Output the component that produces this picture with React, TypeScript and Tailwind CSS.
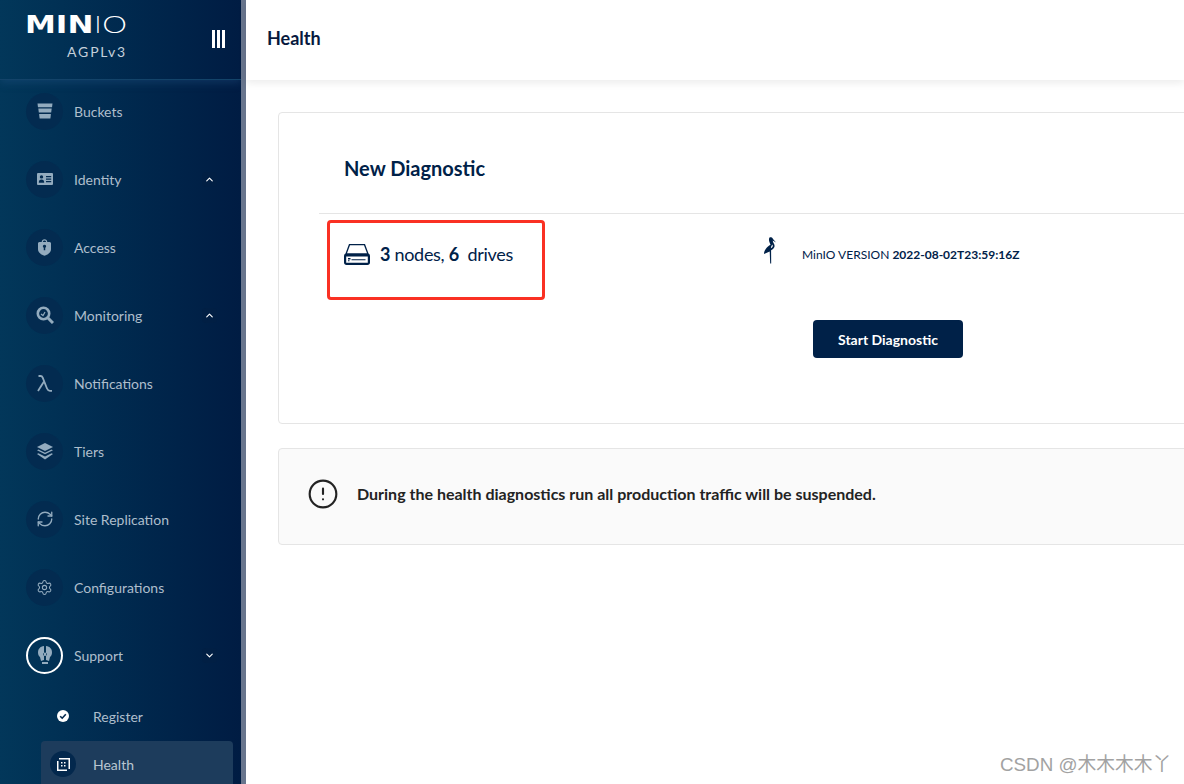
import { ChevronDown, ChevronUp, CircleAlert, RefreshCw, Settings } from 'lucide-react';
import { ReactNode } from 'react';

const BucketIcon = () => (
  <svg width="16" height="16" viewBox="0 0 16 16" fill="currentColor">
    <path d="M0.500 0.500h15l-0.500 3.800h-14z" />
    <path d="M1.300 5.500h13.400l-0.500 4h-12.400z" />
    <path d="M2.100 11h11.800l-0.500 4.500h-10.800z" />
  </svg>
);

const IdentityIcon = () => (
  <svg width="16" height="12" viewBox="0 0 16 12" fill="currentColor">
    <path fillRule="evenodd" d="M1 0h14a1 1 0 0 1 1 1v10a1 1 0 0 1-1 1H1a1 1 0 0 1-1-1V1a1 1 0 0 1 1-1zM4.500 2.200a1.700 1.700 0 1 0 0 3.400 1.700 1.700 0 0 0 0-3.400zM1.800 9.800h5.400c0-2-1-3.200-2.700-3.200S1.800 7.800 1.800 9.800zM9 3v1.200h5.200V3zM9 5.500v1.200h5.200V5.500zM9 8v1.200h5.200V8z" />
  </svg>
);

const AccessIcon = () => (
  <svg width="13" height="17" viewBox="0 0 14 18" fill="currentColor">
    <path fillRule="evenodd" d="M7 0c1.800 0 3 1.200 3 3h2.500L14 4v7c0 3.500-3.500 6-7 7-3.500-1-7-3.500-7-7V4l1.500-1H4c0-1.800 1.200-3 3-3zM7 1.500C6 1.500 5.400 2.100 5.300 3h3.400C8.600 2.100 8 1.500 7 1.500zM7 6a1.800 1.800 0 0 0-0.800 3.400V12h1.600V9.400A1.800 1.800 0 0 0 7 6z" />
  </svg>
);

const MonitoringIcon = () => (
  <svg width="18" height="18" viewBox="0 0 18 18" fill="none" stroke="currentColor">
    <circle cx="7.500" cy="7.500" r="5.700" strokeWidth="2.600" />
    <path d="M12 12l5 5" strokeWidth="3" />
    <path d="M5 8l2 1.500 2-3.500" strokeWidth="1.200" />
  </svg>
);

const LambdaIcon = () => (
  <svg width="16" height="17" viewBox="0 0 16 17" fill="none" stroke="currentColor" strokeWidth="1.800">
    <path d="M1.500 1h2.200c1 0 1.500 0.500 2 1.700L10 13.500c0.600 1.500 1.500 2.300 3 2.300h2" />
    <path d="M7 6.500L1 16" />
  </svg>
);

const TiersIcon = () => (
  <svg width="16" height="17" viewBox="0 0 16 17" fill="currentColor">
    <path d="M8 0l8 4-8 4-8-4z" />
    <path d="M1.500 6.500L8 9.800l6.500-3.300L16 7.300 8 11.300 0 7.300z" />
    <path d="M0 11l1.500-0.800L8 13.400l6.500-3.200L16 11l-8 5.500z" />
  </svg>
);

const SupportIcon = () => (
  <svg width="16" height="18" viewBox="0 0 16 18" fill="currentColor">
    <path fillRule="evenodd" d="M7 0C3 0.500 1 3 1 6.500c0 2 0.800 3.500 2 4.500L4 15l3-1V0zM9 0c4 0.500 6 3 6 6.500 0 2-0.800 3.500-2 4.500l-1 4-3-1V0zM8 6.500a1.800 1.800 0 1 0 0 3.600 1.800 1.800 0 0 0 0-3.600z" />
    <path d="M5 16h6v2H5z" />
  </svg>
);

const RegisterIcon = () => (
  <svg width="12" height="12" viewBox="0 0 12 12">
    <circle cx="6" cy="6" r="6" fill="#ffffff" />
    <path d="M3.200 6.200l2 2 3.600-4" fill="none" stroke="#03284d" strokeWidth="1.600" />
  </svg>
);

const HealthIcon = () => (
  <svg width="13" height="13" viewBox="0 0 13 13" fill="#ffffff">
    <path d="M2 0h11v11h-1.500V1.500H2z" />
    <path d="M0 3h1.500v8.500H10V13H0z" />
    <path d="M4 4h1.500v1.500H4zM7 4h1.500v1.500H7zM4 7h1.500v1.500H4zM7 7h1.500v1.500H7z" />
  </svg>
);

const DriveIcon = () => (
  <svg width="26" height="21" viewBox="0 0 26 21" fill="#002148">
    <path fillRule="evenodd" d="M5 0h16l3.500 9.500c1 0.500 1.500 1.500 1.500 2.500v6.500c0 1.400-1 2.500-2.500 2.500h-21C1 21 0 19.900 0 18.500V12c0-1 0.500-2 1.500-2.500zM6 1.300L3 9.300h20l-3-8zM2.200 12.600v6.200h21.600v-6.200z" />
    <path d="M4 14h2.500v1.500H4zM7.500 15.300h14v1h-14zM4 16.200h1.500v1H4z" />
  </svg>
);

const BirdIcon = () => (
  <svg width="14" height="27" viewBox="0 0 14 27" fill="#002148">
    <path fillRule="evenodd" d="M6.500 0.500c1.500-0.500 3 0 3.300 1.300L13 5.500 9.700 3.600c0.100 2 1.900 3.600 1.900 5.400 0 2-1.800 3.200-3.500 4.300l0.100 13.200H7.200L6.700 14.500 1 17c0-3.500 3-7.500 6.500-9.300L6.400 5c-0.500-1.500-0.700-3.400 0.100-4.500zM8.300 9.200L7.800 11.200c1.200-0.700 2-1.300 2-2.200 0-0.500-0.200-1-0.500-1.500z" />
  </svg>
);

type NavEntry = { label: string; icon: ReactNode; chevron?: 'up' | 'down'; active?: boolean };

const navItems: NavEntry[] = [
  { label: 'Buckets', icon: <BucketIcon /> },
  { label: 'Identity', icon: <IdentityIcon />, chevron: 'up' },
  { label: 'Access', icon: <AccessIcon /> },
  { label: 'Monitoring', icon: <MonitoringIcon />, chevron: 'up' },
  { label: 'Notifications', icon: <LambdaIcon /> },
  { label: 'Tiers', icon: <TiersIcon /> },
  { label: 'Site Replication', icon: <RefreshCw size={18} strokeWidth={1.8} /> },
  { label: 'Configurations', icon: <Settings size={17} strokeWidth={1.5} /> },
  { label: 'Support', icon: <SupportIcon />, chevron: 'down', active: true },
];

function NavItem({ item }: { item: NavEntry }) {
  return (
    <div className="flex h-[68px] shrink-0 items-center pl-[26px] pr-[24px]">
      <div
        className={
          'flex h-[37px] w-[37px] items-center justify-center rounded-full text-[#93abbe] ' +
          (item.active ? 'border-2 border-white' : 'bg-[#032b50]')
        }
      >
        {item.icon}
      </div>
      <span className="ml-[11px] flex-1 text-[14px] text-[#aebecc]">{item.label}</span>
      {item.chevron && (
        <div className="flex h-[15px] w-[15px] items-center justify-center rounded-sm bg-[#011f44] text-white">
          {item.chevron === 'up' ? <ChevronUp size={11} strokeWidth={2.5} /> : <ChevronDown size={11} strokeWidth={2.5} />}
        </div>
      )}
    </div>
  );
}

function Sidebar() {
  return (
    <aside className="flex h-full w-[246px] shrink-0 flex-col overflow-hidden border-r-[5px] border-[#68758d] bg-gradient-to-r from-[#02375a] to-[#001c43]">
      <div className="relative flex h-[80px] shrink-0 items-start justify-between border-b border-[#134369] pl-[25px] pr-[16px] shadow-[0_3px_8px_rgba(40,90,140,0.35)]">
        <div className="flex w-[102px] flex-col">
          <div className="mt-[12px] flex h-[24px] items-center justify-between text-[25px] leading-none text-white [font-family:'DejaVu_Sans',sans-serif]">
            <span className="origin-left scale-x-[1.24] font-bold">MIN</span>
            <span className="flex items-center font-['Lato',sans-serif] text-[24px] font-light">
              <span className="mr-[7px]">I</span>
              <span className="origin-right scale-x-[1.3]">O</span>
            </span>
          </div>
          <div className="mt-[7px] text-right text-[14px] leading-[18px] tracking-[1.8px] text-[#c4d0da]">AGPLv3</div>
        </div>
        <div className="mt-[30px] flex gap-[2px]">
          <div className="h-[18px] w-[3px] bg-white" />
          <div className="h-[18px] w-[3px] bg-white" />
          <div className="h-[18px] w-[3px] bg-white" />
        </div>
      </div>
      <nav className="-mt-[3px] flex flex-col">
        {navItems.map((item) => (
          <NavItem key={item.label} item={item} />
        ))}
        <div className="mt-[10px] flex h-[34px] items-center pl-[57px]">
          <RegisterIcon />
          <span className="ml-[24px] text-[14px] text-[#aebecc]">Register</span>
        </div>
        <div className="ml-[41px] mt-[8px] flex h-[46px] w-[192px] items-center rounded-t-sm bg-[#1d3c5c] pl-[9px]">
          <div className="flex h-[26px] w-[26px] items-center justify-center rounded-full bg-[#03284d]">
            <HealthIcon />
          </div>
          <span className="ml-[17px] text-[14px] text-[#b9c6d2]">Health</span>
        </div>
      </nav>
    </aside>
  );
}

export default function App() {
  return (
    <div className="relative flex h-[784px] w-[1184px] overflow-hidden bg-white font-['Lato',sans-serif] text-[#002148]">
      <Sidebar />
      <main className="flex min-w-0 flex-1 flex-col">
        <header className="flex h-[80px] shrink-0 items-center pl-[21px] shadow-[0_3px_8px_rgba(0,0,0,0.08)]">
          <h1 className="pb-[3px] text-[18px] font-bold text-[#07193e]">Health</h1>
        </header>
        <div className="flex w-[1000px] flex-col pl-[32px] pt-[32px]">
          <section className="h-[312px] rounded-sm border border-[#e5e5e5] pl-[40px]">
            <h2 className="pl-[25px] pt-[41px] text-[20px] font-bold leading-[28px]">New Diagnostic</h2>
            <div className="mt-[31px] flex h-[82px] items-center border-t border-[#e5e5e5] pl-[25px]">
              <DriveIcon />
              <div className="ml-[10px] -mt-[2px] whitespace-pre text-[18px] leading-none tracking-[-0.3px]">
                <b>3</b> nodes, <b>6</b>  drives
              </div>
              <div className="absolute left-[763px] top-[237px]">
                <BirdIcon />
              </div>
              <div className="absolute left-[802px] top-[247px] text-[12px] leading-[15px]">
                MinIO VERSION <b>2022-08-02T23:59:16Z</b>
              </div>
            </div>
            <div className="ml-[494px] mt-[25px]">
              <button className="h-[38px] w-[150px] rounded-sm bg-[#002148] text-[14px] font-bold text-white">Start Diagnostic</button>
            </div>
          </section>
          <section className="mt-[24px] flex h-[97px] items-center rounded-sm border border-[#e5e5e5] bg-[#fafafa] pb-[6px] pl-[28px] text-[#232323]">
            <CircleAlert size={32} strokeWidth={1.6} />
            <p className="ml-[18px] text-[16px] font-bold">During the health diagnostics run all production traffic will be suspended.</p>
          </section>
        </div>
      </main>
      <div className="absolute left-[327px] top-[220px] h-[80px] w-[218px] rounded-[4px] border-[3px] border-[#fa3123]" />
      <div className="absolute left-[1000px] top-[752px] text-[18.8px] leading-[26px] text-[#a2a2a2] [font-family:'Liberation_Sans','Noto_Sans_CJK_SC',sans-serif]">
        CSDN @木木木木丫
      </div>
    </div>
  );
}
